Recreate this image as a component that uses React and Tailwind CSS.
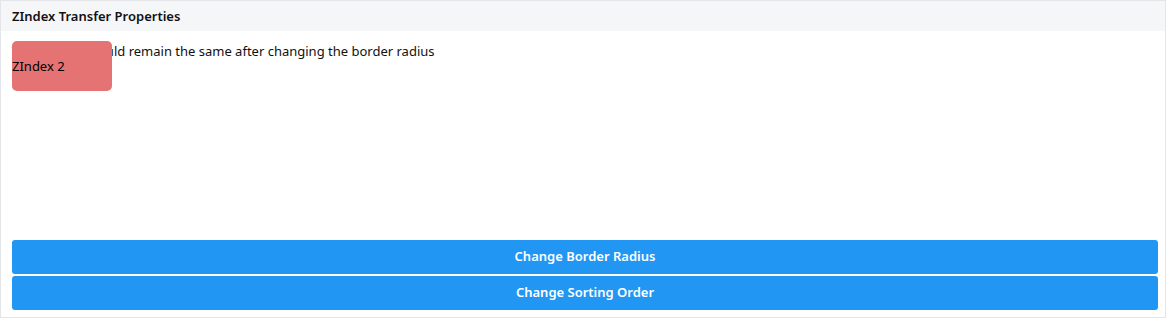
import React from "react";

export default function App() {
  return (
    <div className="w-[1168px] h-[318px] bg-white" style={{ fontFamily: '"Noto Sans", "Open Sans", sans-serif' }}>
      <div className="w-[1166px] h-[318px] border border-[#e3e5e8] flex flex-col">
        <div className="h-[30px] bg-[#f5f6f8] px-[11px] flex items-center pt-[1px] text-[13px] font-semibold text-[#111]">
          ZIndex Transfer Properties
        </div>
        <div className="flex-1 flex flex-col pl-[11px] pr-[7px] pb-[7px]">
          <div className="relative pt-[10px] flex-1">
            <p className="text-[13px] text-[#111] leading-5">
              Their order should remain the same after changing the border radius
            </p>
            <div className="absolute left-0 top-[10px] w-[100px] h-[50px] bg-[#e57373] rounded-[5px] flex items-center pt-[2px] text-[13px] text-black">
              ZIndex 2
            </div>
          </div>
          <div className="flex flex-col gap-[2px]">
            <button className="h-[34px] w-full rounded-[3px] bg-[#2196f3] text-white text-[13px] font-semibold">
              Change Border Radius
            </button>
            <button className="h-[34px] w-full rounded-[3px] bg-[#2196f3] text-white text-[13px] font-semibold">
              Change Sorting Order
            </button>
          </div>
        </div>
      </div>
    </div>
  );
}
